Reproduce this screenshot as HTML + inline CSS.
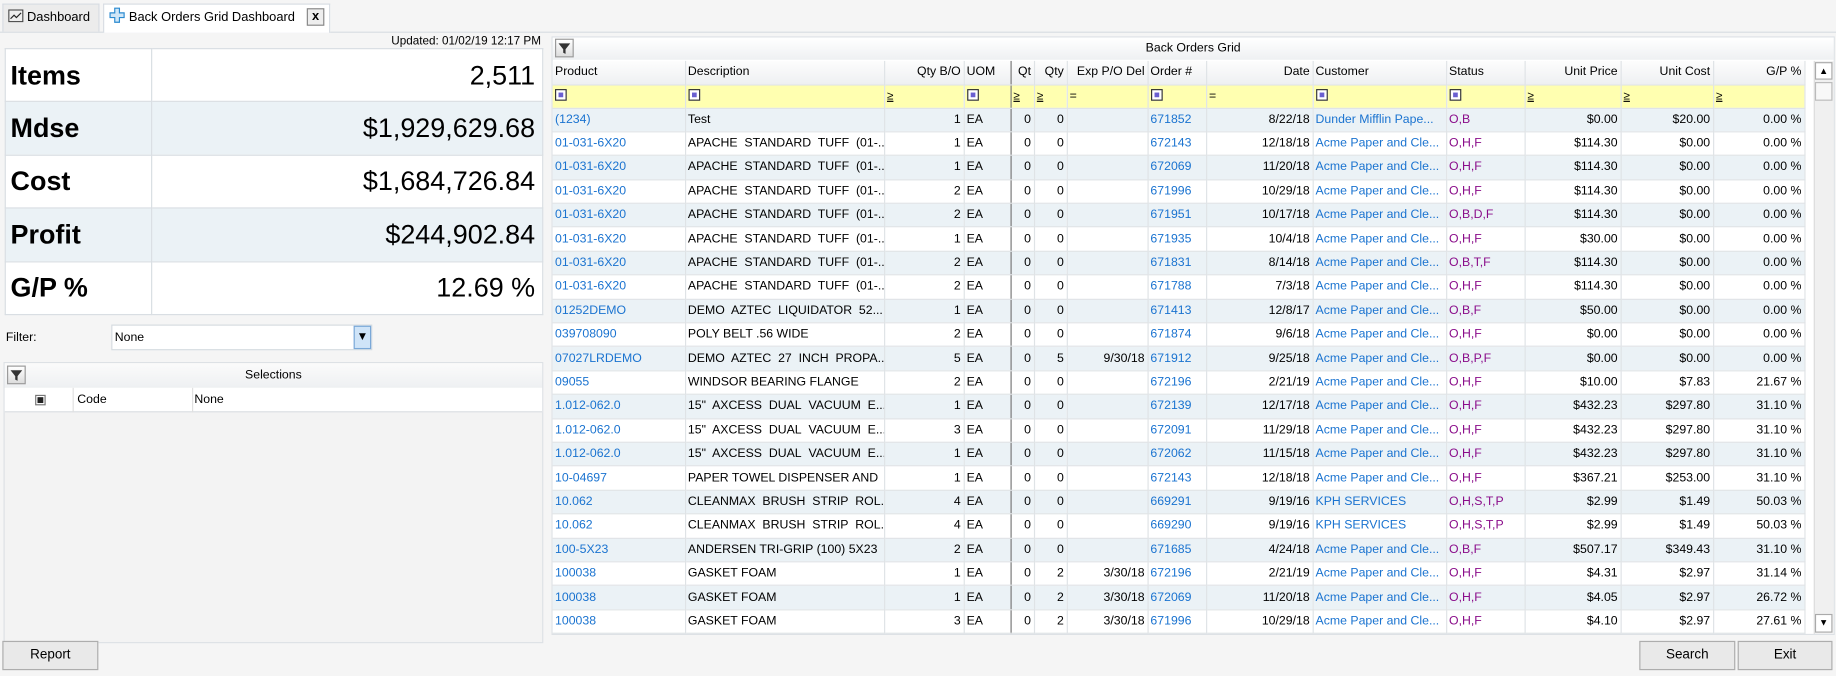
<!DOCTYPE html>
<html><head><meta charset="utf-8"><style>
*{box-sizing:border-box;margin:0;padding:0}
html,body{width:1836px;height:676px;overflow:hidden;background:#f5f5f5}
#w{position:absolute;left:0;top:0;width:1568px;height:577px;transform:scale(1.17092,1.1716);transform-origin:0 0;font-family:"Liberation Sans","DejaVu Sans",sans-serif;font-size:10.5px;color:#000}
.abs{position:absolute}
.tab{position:absolute;top:3px;height:24px;border:1px solid #d8dde3;border-bottom:none;font-size:11px;line-height:22px;padding-left:4px;white-space:nowrap}
table{border-collapse:collapse;table-layout:fixed}
#kpi{position:absolute;left:4px;top:41px;width:460px;border:1px solid #d9dee3}
#kpi td{height:45.4px;border:1px solid #d9dee3;font-size:23px}
#kpi td.l{font-weight:bold;padding-left:4px;width:125px}
#kpi td.v{text-align:right;padding-right:6px}
#kpi tr:nth-child(even) td{background:#ebf2f6}
#kpi tr:nth-child(odd) td{background:#fff}
#g{position:absolute;left:472px;top:52px;width:1069px}
#g td{height:20.4px;border-right:1px solid #dfe3e6;border-bottom:1px solid #dfe3e6;white-space:nowrap;overflow:hidden;padding:0 2px;line-height:19px}
#g tr.h td{background:linear-gradient(#fdfdfd,#eef0f2);height:20px}
#g tr.f td{background:#ffffb0;height:20px}
#g tr.r:nth-child(odd) td{background:#ebf2f6}
#g tr.r:nth-child(even) td{background:#fff}
.R{text-align:right}
.a{color:#1a73d0}
.s{color:#8a0c8a}
.ck{display:inline-block;width:10px;height:10px;border:1px solid #333;background:#fff;vertical-align:middle;position:relative;top:-1px}
.ck:after{content:"";position:absolute;left:2px;top:2px;width:4px;height:4px;background:#6a5fd0}
.ge{text-decoration:underline;font-size:10px}
.dv{border-right:1px solid #777!important}
.btn{position:absolute;height:25px;border:1px solid #adadad;background:#e9e9e9;text-align:center;line-height:23px;font-size:11.5px}
.fun{position:absolute;width:16px;height:16px;border:1px solid #999;background:linear-gradient(#fff,#ddd)}
</style></head><body><div id="w">
<div class="abs" style="left:0;top:27px;width:1568px;height:1px;background:#d8dde3"></div>
<div class="tab" style="left:2px;width:83px;background:#ececec"><svg width="13" height="11" style="vertical-align:-1px"><rect x=".5" y=".5" width="12" height="10" fill="#eee" stroke="#444"/><path d="M2 8 L5 5 L7 7 L11 3" stroke="#222" fill="none"/></svg> Dashboard</div>
<div class="tab" style="left:88px;width:194px;background:#fff;height:25px"><svg width="14" height="14" style="vertical-align:-2px"><path d="M5 1h4v4h4v4h-4v4h-4v-4h-4v-4h4z" fill="#cfe6f7" stroke="#2a8ad0"/></svg> Back Orders Grid Dashboard</div>
<div class="abs" style="left:262px;top:7px;width:15px;height:15px;border:1px solid #888;background:#eee;text-align:center;line-height:13px;font-weight:bold;font-size:11px">x</div>
<div class="abs" style="left:300px;top:30px;width:162px;text-align:right;font-size:10px">Updated: 01/02/19 12:17 PM</div>
<table id="kpi">
<tr><td class="l">Items</td><td class="v">2,511</td></tr>
<tr><td class="l">Mdse</td><td class="v">$1,929,629.68</td></tr>
<tr><td class="l">Cost</td><td class="v">$1,684,726.84</td></tr>
<tr><td class="l">Profit</td><td class="v">$244,902.84</td></tr>
<tr><td class="l">G/P %</td><td class="v">12.69 %</td></tr>
</table>
<div class="abs" style="left:5px;top:282px">Filter:</div>
<div class="abs" style="left:95px;top:277px;width:223px;height:22px;background:#fff;border:1px solid #d5dbe0;padding:4px 2px">None</div>
<div class="abs" style="left:302px;top:278px;width:15px;height:20px;background:#cfe4f8;border:1px solid #7aa8d8;text-align:center;font-size:10px;line-height:18px">&#9660;</div>
<div class="abs" style="left:3px;top:309px;width:461px;height:240px;border:1px solid #dde1e5;background:#f3f3f3"></div>
<div class="abs" style="left:4px;top:310px;width:459px;height:21px;background:linear-gradient(#fbfbfb,#eef0f2);text-align:center;line-height:20px">Selections</div>
<div class="fun" style="left:6px;top:312px"><svg width="14" height="14"><path d="M2 3h10l-4 5v4l-2-1v-3z" fill="#333"/></svg></div>
<div class="abs" style="left:4px;top:331px;width:459px;height:21px;background:#fff;border-bottom:1px solid #d9dde2"></div>
<div class="abs" style="left:30px;top:337px;width:9px;height:9px;border:1px solid #777;background:#fff"><div style="margin:1px;width:5px;height:5px;background:#222"></div></div>
<div class="abs" style="left:62px;top:331px;width:1px;height:21px;background:#e0e0e0"></div>
<div class="abs" style="left:164px;top:331px;width:1px;height:21px;background:#e0e0e0"></div>
<div class="abs" style="left:66px;top:335px">Code</div>
<div class="abs" style="left:166px;top:335px">None</div>
<div class="abs" style="left:471px;top:31px;width:1096px;height:511px;border:1px solid #dde1e5;background:#fff"></div>
<div class="abs" style="left:472px;top:32px;width:1094px;height:19px;background:linear-gradient(#fff,#eef0f2);text-align:center;line-height:18px">Back Orders Grid</div>
<div class="fun" style="left:474px;top:33px"><svg width="14" height="14"><path d="M2 3h10l-4 5v4l-2-1v-3z" fill="#333"/></svg></div>
<table id="g">
<colgroup><col style="width:113px"><col style="width:170px"><col style="width:68px"><col style="width:40px"><col style="width:20px"><col style="width:28px"><col style="width:69px"><col style="width:50px"><col style="width:91px"><col style="width:114px"><col style="width:67px"><col style="width:82px"><col style="width:79px"><col style="width:78px"></colgroup>
<tr class="h"><td>Product</td><td>Description</td><td class="R">Qty B/O</td><td class="dv">UOM</td><td class="R">Qt</td><td class="R">Qty</td><td class="R">Exp P/O Del</td><td>Order #</td><td class="R">Date</td><td>Customer</td><td>Status</td><td class="R">Unit Price</td><td class="R">Unit Cost</td><td class="R">G/P %</td></tr>
<tr class="f"><td><span class="ck"></span></td><td><span class="ck"></span></td><td><span class="ge">&ge;</span></td><td class="dv"><span class="ck"></span></td><td><span class="ge">&ge;</span></td><td><span class="ge">&ge;</span></td><td>=</td><td><span class="ck"></span></td><td>=</td><td><span class="ck"></span></td><td><span class="ck"></span></td><td><span class="ge">&ge;</span></td><td><span class="ge">&ge;</span></td><td><span class="ge">&ge;</span></td></tr>
</table>
<div class="abs" style="left:1549px;top:52px;width:17px;height:489px;background:#f0f0f0;border-left:1px solid #ddd"></div>
<div class="abs" style="left:1550px;top:53px;width:15px;height:15px;border:1px solid #aaa;background:#fff;font-size:8px;text-align:center;line-height:13px">&#9650;</div>
<div class="abs" style="left:1550px;top:70px;width:15px;height:16px;border:1px solid #bbb;background:#f8f8f8"></div>
<div class="abs" style="left:1550px;top:524px;width:15px;height:16px;border:1px solid #aaa;background:#fff;font-size:8px;text-align:center;line-height:14px">&#9660;</div>
<div class="btn" style="left:2px;top:547px;width:82px">Report</div>
<div class="btn" style="left:1400px;top:547px;width:82px">Search</div>
<div class="btn" style="left:1484px;top:547px;width:81px">Exit</div>
<script>
var d=[
["(1234)","Test",1,0,0,"","671852","8/22/18","Dunder Mifflin Pape...","O,B","$0.00","$20.00","0.00 %"],
["01-031-6X20","APACHE&nbsp; STANDARD&nbsp; TUFF&nbsp; (01-...",1,0,0,"","672143","12/18/18","Acme Paper and Cle...","O,H,F","$114.30","$0.00","0.00 %"],
["01-031-6X20","APACHE&nbsp; STANDARD&nbsp; TUFF&nbsp; (01-...",1,0,0,"","672069","11/20/18","Acme Paper and Cle...","O,H,F","$114.30","$0.00","0.00 %"],
["01-031-6X20","APACHE&nbsp; STANDARD&nbsp; TUFF&nbsp; (01-...",2,0,0,"","671996","10/29/18","Acme Paper and Cle...","O,H,F","$114.30","$0.00","0.00 %"],
["01-031-6X20","APACHE&nbsp; STANDARD&nbsp; TUFF&nbsp; (01-...",2,0,0,"","671951","10/17/18","Acme Paper and Cle...","O,B,D,F","$114.30","$0.00","0.00 %"],
["01-031-6X20","APACHE&nbsp; STANDARD&nbsp; TUFF&nbsp; (01-...",1,0,0,"","671935","10/4/18","Acme Paper and Cle...","O,H,F","$30.00","$0.00","0.00 %"],
["01-031-6X20","APACHE&nbsp; STANDARD&nbsp; TUFF&nbsp; (01-...",2,0,0,"","671831","8/14/18","Acme Paper and Cle...","O,B,T,F","$114.30","$0.00","0.00 %"],
["01-031-6X20","APACHE&nbsp; STANDARD&nbsp; TUFF&nbsp; (01-...",2,0,0,"","671788","7/3/18","Acme Paper and Cle...","O,H,F","$114.30","$0.00","0.00 %"],
["01252DEMO","DEMO&nbsp; AZTEC&nbsp; LIQUIDATOR&nbsp; 52...",1,0,0,"","671413","12/8/17","Acme Paper and Cle...","O,B,F","$50.00","$0.00","0.00 %"],
["039708090","POLY BELT .56 WIDE",2,0,0,"","671874","9/6/18","Acme Paper and Cle...","O,H,F","$0.00","$0.00","0.00 %"],
["07027LRDEMO","DEMO&nbsp; AZTEC&nbsp; 27&nbsp; INCH&nbsp; PROPA...",5,0,5,"9/30/18","671912","9/25/18","Acme Paper and Cle...","O,B,P,F","$0.00","$0.00","0.00 %"],
["09055","WINDSOR BEARING FLANGE",2,0,0,"","672196","2/21/19","Acme Paper and Cle...","O,H,F","$10.00","$7.83","21.67 %"],
["1.012-062.0","15\"&nbsp; AXCESS&nbsp; DUAL&nbsp; VACUUM&nbsp; E...",1,0,0,"","672139","12/17/18","Acme Paper and Cle...","O,H,F","$432.23","$297.80","31.10 %"],
["1.012-062.0","15\"&nbsp; AXCESS&nbsp; DUAL&nbsp; VACUUM&nbsp; E...",3,0,0,"","672091","11/29/18","Acme Paper and Cle...","O,H,F","$432.23","$297.80","31.10 %"],
["1.012-062.0","15\"&nbsp; AXCESS&nbsp; DUAL&nbsp; VACUUM&nbsp; E...",1,0,0,"","672062","11/15/18","Acme Paper and Cle...","O,H,F","$432.23","$297.80","31.10 %"],
["10-04697","PAPER TOWEL DISPENSER AND",1,0,0,"","672143","12/18/18","Acme Paper and Cle...","O,H,F","$367.21","$253.00","31.10 %"],
["10.062","CLEANMAX&nbsp; BRUSH&nbsp; STRIP&nbsp; ROL...",4,0,0,"","669291","9/19/16","KPH SERVICES","O,H,S,T,P","$2.99","$1.49","50.03 %"],
["10.062","CLEANMAX&nbsp; BRUSH&nbsp; STRIP&nbsp; ROL...",4,0,0,"","669290","9/19/16","KPH SERVICES","O,H,S,T,P","$2.99","$1.49","50.03 %"],
["100-5X23","ANDERSEN TRI-GRIP (100) 5X23",2,0,0,"","671685","4/24/18","Acme Paper and Cle...","O,B,F","$507.17","$349.43","31.10 %"],
["100038","GASKET FOAM",1,0,2,"3/30/18","672196","2/21/19","Acme Paper and Cle...","O,H,F","$4.31","$2.97","31.14 %"],
["100038","GASKET FOAM",1,0,2,"3/30/18","672069","11/20/18","Acme Paper and Cle...","O,H,F","$4.05","$2.97","26.72 %"],
["100038","GASKET FOAM",3,0,2,"3/30/18","671996","10/29/18","Acme Paper and Cle...","O,H,F","$4.10","$2.97","27.61 %"]];
var h="";d.forEach(function(r){h+='<tr class="r"><td class="a">'+r[0]+'</td><td>'+r[1]+'</td><td class="R">'+r[2]+'</td><td class="dv">EA</td><td class="R">'+r[3]+'</td><td class="R">'+r[4]+'</td><td class="R">'+r[5]+'</td><td class="a">'+r[6]+'</td><td class="R">'+r[7]+'</td><td class="a">'+r[8]+'</td><td class="s">'+r[9]+'</td><td class="R">'+r[10]+'</td><td class="R">'+r[11]+'</td><td class="R">'+r[12]+'</td></tr>';});
document.getElementById("g").insertAdjacentHTML("beforeend",h);
</script>
</div></body></html>
